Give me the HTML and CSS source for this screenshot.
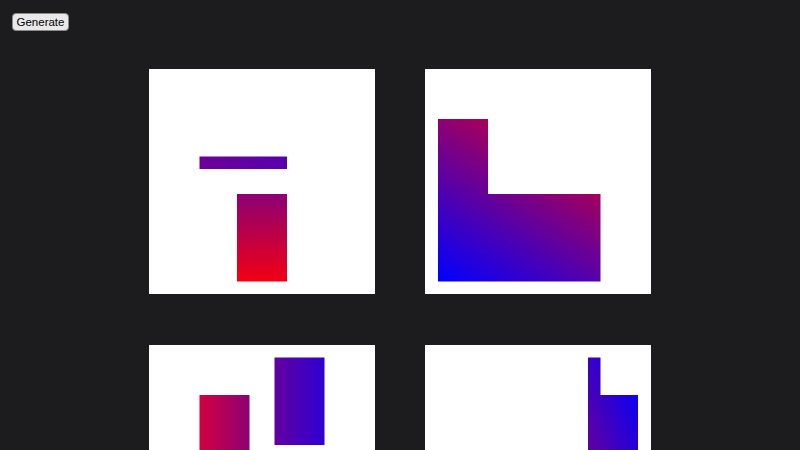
FILE: index.html
```html
<!DOCTYPE html>
<html>
<head>
<meta charset="utf-8">
<link rel="stylesheet" href="styles.css">
</head>
<body>
<div class="toolbar"><button class="gen">Generate</button></div>
<div class="grid">
  <svg class="cv" viewBox="0 0 225 225" width="225" height="225">
    <defs>
      <linearGradient id="g1a" x1="0" y1="0" x2="1" y2="0"><stop offset="0" stop-color="#6c0096"/><stop offset="1" stop-color="#5800ae"/></linearGradient>
      <linearGradient id="g1b" x1="0" y1="0" x2="0" y2="1"><stop offset="0" stop-color="#8c0074"/><stop offset="1" stop-color="#f20012"/></linearGradient>
    </defs>
    <rect x="50" y="87.5" width="87.5" height="12.5" fill="url(#g1a)"/>
    <rect x="87.5" y="125" width="50" height="87.5" fill="url(#g1b)"/>
  </svg>
  <svg class="cv" viewBox="0 0 225 225" width="225" height="225">
    <defs>
      <linearGradient id="g2" gradientUnits="userSpaceOnUse" x1="12.5" y1="212.5" x2="120" y2="40"><stop offset="0" stop-color="#0000ff"/><stop offset="1" stop-color="#d00030"/></linearGradient>
    </defs>
    <path d="M12.5 50H62.5V125H175V212.5H12.5Z" fill="url(#g2)"/>
  </svg>
  <svg class="cv" viewBox="0 0 225 225" width="225" height="225">
    <defs>
      <linearGradient id="g3a" x1="0" y1="0" x2="1" y2="0"><stop offset="0" stop-color="#d20040"/><stop offset="1" stop-color="#8c0074"/></linearGradient>
      <linearGradient id="g3b" x1="0" y1="0" x2="1" y2="0"><stop offset="0" stop-color="#62009e"/><stop offset="1" stop-color="#2e00d2"/></linearGradient>
    </defs>
    <rect x="50" y="50" width="50" height="100" fill="url(#g3a)"/>
    <rect x="125" y="12.5" width="50" height="87.5" fill="url(#g3b)"/>
  </svg>
  <svg class="cv" viewBox="0 0 225 225" width="225" height="225">
    <defs>
      <linearGradient id="g4" gradientUnits="userSpaceOnUse" x1="155" y1="60" x2="212.5" y2="40"><stop offset="0" stop-color="#5800a6"/><stop offset="1" stop-color="#0800f8"/></linearGradient>
    </defs>
    <path d="M162.5 12.5H175V50H212.5V150H162.5Z" fill="url(#g4)"/>
  </svg>
</div>
</body>
</html>
```
FILE: styles.css
```css
html, body {
  margin: 0;
  padding: 0;
  background: #1c1c1e;
}
body {
  padding: 13px 12px 0;
  font-family: "Liberation Sans", Arial, sans-serif;
}
.toolbar {
  display: flex;
  height: 18px;
}
.gen {
  font-family: "Liberation Sans", Arial, sans-serif;
  font-size: 11.5px;
  color: #000;
  background: #e9e9e9;
  border: 1px solid #8a8a8a;
  border-radius: 4px;
  padding: 0;
  height: 18px;
  width: 57px;
  line-height: 16px;
  text-align: center;
  margin: 0;
}
.grid {
  display: grid;
  grid-template-columns: 226px 226px;
  column-gap: 50px;
  row-gap: 51px;
  justify-content: center;
  margin-top: 38px;
  margin-left: -12px;
  margin-right: -12px;
}
.cv {
  display: block;
  width: 226px;
  height: 225px;
  background: #ffffff;
}
```
